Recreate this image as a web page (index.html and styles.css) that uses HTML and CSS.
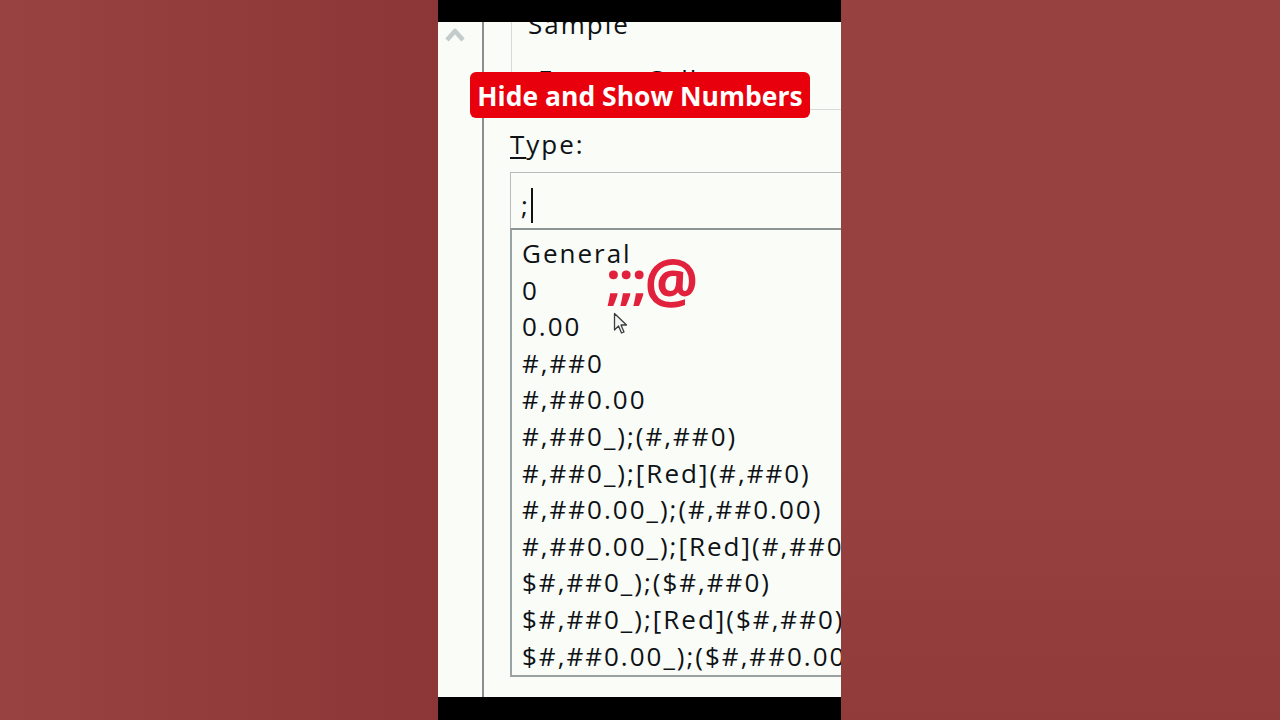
FILE: index.html
```html
<!DOCTYPE html>
<html lang="en">
<head>
<meta charset="utf-8">
<title>Hide and Show Numbers</title>
<link rel="stylesheet" href="styles.css">
</head>
<body>
<div class="page">
  <div class="side side-left"></div>
  <div class="panel">
    <div class="bar"></div>
    <div class="content">
      <div class="strip">
        <svg class="chevron" width="22" height="16" viewBox="0 0 22 16"><polyline points="3,13 11,4 19,13" fill="none" stroke="#c3cbcb" stroke-width="4.5" stroke-linejoin="round"/></svg>
      </div>
      <div class="divider"></div>
      <div class="main">
        <div class="sample-box">
          <div class="sample-title">Sample</div>
          <div class="sample-text">Format Cells</div>
        </div>
        <div class="type-label"><span class="ul">T</span>ype:</div>
        <div class="type-input"><span>;</span><span class="caret"></span></div>
        <ul class="format-list">
          <li>General</li>
          <li>0</li>
          <li>0.00</li>
          <li>#,##0</li>
          <li>#,##0.00</li>
          <li>#,##0_);(#,##0)</li>
          <li>#,##0_);[Red](#,##0)</li>
          <li>#,##0.00_);(#,##0.00)</li>
          <li>#,##0.00_);[Red](#,##0.00)</li>
          <li>$#,##0_);($#,##0)</li>
          <li>$#,##0_);[Red]($#,##0)</li>
          <li>$#,##0.00_);($#,##0.00)</li>
        </ul>
      </div>
    </div>
    <div class="bar bar-bottom"></div>
    <div class="caption">Hide and Show Numbers</div>
    <div class="symbols"><span class="semis">;;;</span><span class="at">@</span></div>
    <svg class="pointer" width="16" height="24" viewBox="0 0 16 24"><path d="M1.5 1.5 L1.5 18 L5.5 14 L8.5 21 L11 20 L8 13 L13.5 13 Z" fill="#f4f6f4" stroke="#3a3e40" stroke-width="1.3" stroke-linejoin="round"/></svg>
  </div>
  <div class="side side-right"></div>
</div>
</body>
</html>
```

FILE: styles.css
```css
html, body {
  margin: 0;
  padding: 0;
  width: 1280px;
  height: 720px;
  overflow: hidden;
}

.page {
  display: flex;
  width: 1280px;
  height: 720px;
}

.side {
  height: 720px;
}

.side-left {
  width: 438px;
  background: linear-gradient(to right, #984341 0%, #933c3c 50%, #8c3637 100%);
}

.side-right {
  width: 439px;
  background: linear-gradient(to bottom, #974140 0%, #974040 70%, #913b3b 100%);
}

.panel {
  position: relative;
  width: 403px;
  height: 720px;
  display: flex;
  flex-direction: column;
  background: #f9fcf7;
}

.bar {
  height: 22px;
  background: #000;
  position: relative;
  z-index: 2;
}

.bar-bottom {
  height: 23px;
}

.content {
  height: 675px;
  display: grid;
  grid-template-columns: 44px 2px 1fr;
  overflow: hidden;
  font-family: "Open Sans", "Noto Sans", sans-serif;
  font-size: 26px;
  letter-spacing: 2px;
  color: #0e1216;
}

.strip {
  padding: 5px 0 0 6px;
}

.chevron {
  display: block;
}

.divider {
  background: #8a8e8e;
}

.main {
  padding-left: 26px;
  overflow: hidden;
  min-width: 0;
}

.sample-box {
  display: flow-root;
  height: 88px;
  box-sizing: border-box;
  margin-left: 1px;
  border-left: 1px solid #d6dada;
  border-bottom: 1px solid #d6dada;
  padding-left: 16px;
  white-space: nowrap;
}

.sample-title {
  line-height: 36px;
  margin-top: -16px;
}

.sample-text {
  line-height: 36px;
  margin-top: 19px;
  padding-left: 10px;
}

.type-label {
  line-height: 36px;
  margin-top: 16px;
  height: 36px;
}

.ul {
  text-decoration: underline;
  text-underline-offset: 3px;
  text-decoration-thickness: 2px;
}

.type-input {
  margin-top: 10px;
  height: 56px;
  box-sizing: border-box;
  border-top: 1px solid #b4bcbc;
  border-left: 1px solid #b4bcbc;
  padding: 9px 0 0 10px;
  line-height: 36px;
  display: flex;
  align-items: center;
}

.caret {
  display: inline-block;
  width: 2px;
  height: 35px;
  background: #111;
  margin-left: 1px;
}

.format-list {
  list-style: none;
  margin: 0;
  padding: 5px 0 0 10px;
  height: 449px;
  box-sizing: border-box;
  border-top: 2px solid #8c9494;
  border-left: 2px solid #9ba2a2;
  border-bottom: 2px solid #9ba2a2;
  white-space: nowrap;
  overflow: hidden;
}

.format-list li {
  line-height: 36.6px;
  height: 36.6px;
}

.caption {
  position: absolute;
  left: 32px;
  top: 72px;
  width: 340px;
  height: 46px;
  box-sizing: border-box;
  padding-top: 3px;
  border-radius: 6px;
  background: #e8000c;
  color: #fff;
  font-family: "Open Sans", "Noto Sans", sans-serif;
  font-weight: 700;
  font-size: 26.5px;
  line-height: 43px;
  text-align: center;
  white-space: nowrap;
  z-index: 3;
}

.symbols {
  position: absolute;
  left: 168px;
  top: 248px;
  color: #e2213d;
  font-family: "Open Sans", "Noto Sans", sans-serif;
  font-weight: 700;
  line-height: 60px;
  white-space: nowrap;
  z-index: 3;
}

.semis {
  font-size: 52px;
  letter-spacing: -2px;
  position: relative;
  top: -2px;
}

.at {
  font-size: 60px;
  margin-left: 0;
  position: relative;
  top: 2px;
}

.pointer {
  position: absolute;
  left: 175px;
  top: 312px;
  z-index: 3;
}
```
